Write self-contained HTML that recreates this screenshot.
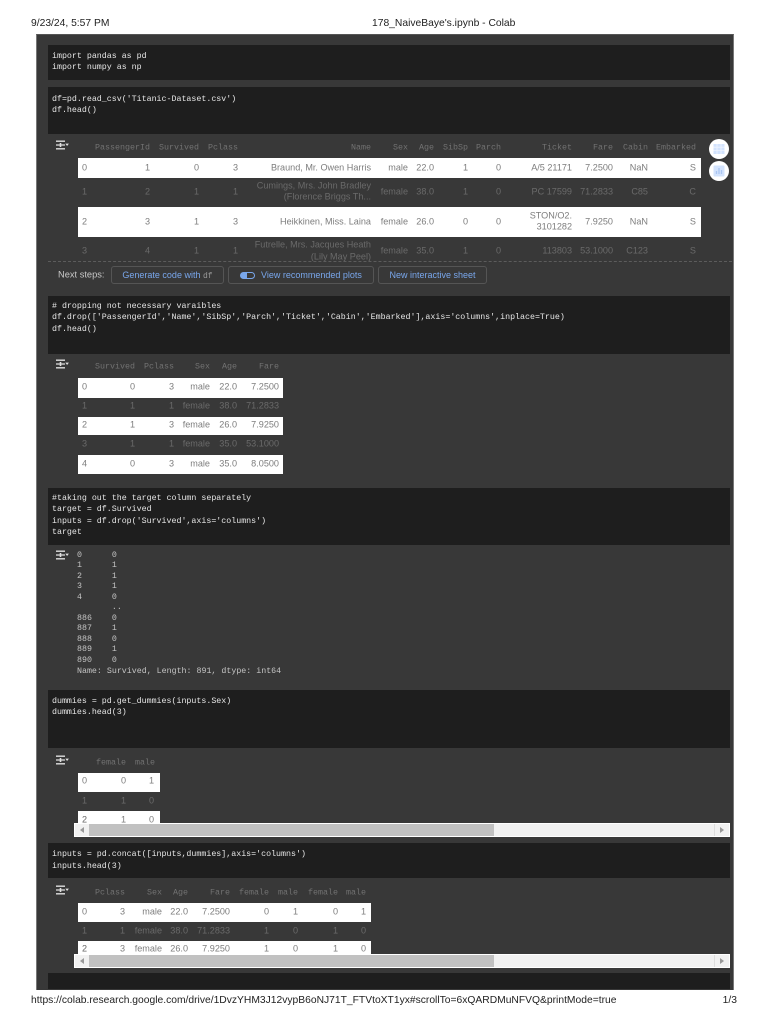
<!DOCTYPE html>
<html><head><meta charset="utf-8"><style>
html,body{margin:0;padding:0;background:#fff}
#p{position:relative;width:768px;height:1024px;overflow:hidden;background:#fff;font-family:"Liberation Sans",sans-serif;filter:blur(.3px)}
#d{position:absolute;left:36px;top:34px;width:696px;height:955px;background:#383838;border-left:1px solid #777;border-right:1px solid #777;border-top:1px solid #555}
.a{position:absolute}
.c{position:absolute;left:48px;width:682px;background:#1e1e1e}
.m{position:absolute;left:52px;margin:0;font:8.3px/11.6px "Liberation Mono",monospace;color:#e6e6e6;white-space:pre}
.o{color:#c4c4c4;left:77px;line-height:10.55px}
.w{position:absolute;background:#fff}
.t,.h,.l{position:absolute;white-space:nowrap;transform:translateY(-50%);line-height:11px}
.t{font-size:9.1px;color:#6a6a6a;text-align:right}
.k{color:#7d7d7d}
.h{font:8.33px/11px "Liberation Mono",monospace;color:#727272}
.l{font-size:9.5px}
.b{position:absolute;top:266px;height:16px;border:1px solid #555;border-radius:3px;color:#79a7ec;font-size:9px;line-height:16px;text-align:center;white-space:nowrap}
.s{position:absolute;left:74px;width:654px;height:12px;background:#f1f1f1;border:1px solid #fff;box-sizing:content-box}
.th{position:absolute;left:14px;width:405px;top:0;height:12px;background:#c1c1c1}
.ar{position:absolute;top:3px;width:0;height:0;border-top:3px solid transparent;border-bottom:3px solid transparent}
.f{position:absolute;font-size:10.3px;line-height:12px;color:#222;white-space:nowrap}
.clip{position:absolute;overflow:hidden}
</style></head><body><div id="p">
<svg width="0" height="0" style="position:absolute"><symbol id="e" viewBox="0 0 14 10"><path d="M1 1.2h9M1 5h9M1 8.8h9" stroke="#e0e0e0" stroke-width="1.3" fill="none"/><path d="M5.5 3v4" stroke="#e0e0e0" stroke-width="1.6"/><path d="M10.3 3.6h3.6L12.1 6z" fill="#e0e0e0"/></symbol></svg>

<div class="f" style="left:31px;top:17.5px">9/23/24, 5:57 PM</div>
<div class="f" style="left:372px;top:17.5px">178_NaiveBaye's.ipynb - Colab</div>

<div id="d"></div>
<div class="c" style="top:45px;height:35px"></div>
<div class="c" style="top:87px;height:47px"></div>
<div class="c" style="top:296px;height:58px"></div>
<div class="c" style="top:488px;height:57px"></div>
<div class="c" style="top:690px;height:58px"></div>
<div class="c" style="top:843px;height:35px"></div>
<div class="c" style="top:973px;height:16px"></div>

<pre class="m" style="top:50.5px">import pandas as pd
import numpy as np</pre>
<pre class="m" style="top:93.5px">df=pd.read_csv('Titanic-Dataset.csv')
df.head()</pre>
<pre class="m" style="top:300.7px"># dropping not necessary varaibles
df.drop(['PassengerId','Name','SibSp','Parch','Ticket','Cabin','Embarked'],axis='columns',inplace=True)
df.head()</pre>
<pre class="m" style="top:492.5px">#taking out the target column separately
target = df.Survived
inputs = df.drop('Survived',axis='columns')
target</pre>
<pre class="m" style="top:695.5px">dummies = pd.get_dummies(inputs.Sex)
dummies.head(3)</pre>
<pre class="m" style="top:849px">inputs = pd.concat([inputs,dummies],axis='columns')
inputs.head(3)</pre>

<svg class="a" style="left:55px;top:140px" width="14" height="10"><use href="#e"/></svg>
<svg class="a" style="left:55px;top:359px" width="14" height="10"><use href="#e"/></svg>
<svg class="a" style="left:55px;top:550px" width="14" height="10"><use href="#e"/></svg>
<svg class="a" style="left:55px;top:755px" width="14" height="10"><use href="#e"/></svg>
<svg class="a" style="left:55px;top:885px" width="14" height="10"><use href="#e"/></svg>

<!-- table 1 -->
<div class="w" style="left:78px;top:158px;width:623px;height:20px"></div>
<div class="w" style="left:78px;top:207px;width:623px;height:30px"></div>
<span class="h" style="right:618px;top:148px">PassengerId</span><span class="h" style="right:569px;top:148px">Survived</span><span class="h" style="right:530px;top:148px">Pclass</span><span class="h" style="right:397px;top:148px">Name</span><span class="h" style="right:360px;top:148px">Sex</span><span class="h" style="right:334px;top:148px">Age</span><span class="h" style="right:300px;top:148px">SibSp</span><span class="h" style="right:267px;top:148px">Parch</span><span class="h" style="right:196px;top:148px">Ticket</span><span class="h" style="right:155px;top:148px">Fare</span><span class="h" style="right:120px;top:148px">Cabin</span><span class="h" style="right:72px;top:148px">Embarked</span>

<span class="t k" style="left:82px;top:168px">0</span><span class="t k" style="right:618px;top:168px">1</span><span class="t k" style="right:569px;top:168px">0</span><span class="t k" style="right:530px;top:168px">3</span><span class="t k" style="right:397px;top:168px">Braund, Mr. Owen Harris</span><span class="t k" style="right:360px;top:168px">male</span><span class="t k" style="right:334px;top:168px">22.0</span><span class="t k" style="right:300px;top:168px">1</span><span class="t k" style="right:267px;top:168px">0</span><span class="t k" style="right:196px;top:168px">A/5 21171</span><span class="t k" style="right:155px;top:168px">7.2500</span><span class="t k" style="right:120px;top:168px">NaN</span><span class="t k" style="right:72px;top:168px">S</span>

<span class="t" style="left:82px;top:192px">1</span><span class="t" style="right:618px;top:192px">2</span><span class="t" style="right:569px;top:192px">1</span><span class="t" style="right:530px;top:192px">1</span><span class="t" style="right:397px;top:186px">Cumings, Mrs. John Bradley</span><span class="t" style="right:397px;top:197px">(Florence Briggs Th...</span><span class="t" style="right:360px;top:192px">female</span><span class="t" style="right:334px;top:192px">38.0</span><span class="t" style="right:300px;top:192px">1</span><span class="t" style="right:267px;top:192px">0</span><span class="t" style="right:196px;top:192px">PC 17599</span><span class="t" style="right:155px;top:192px">71.2833</span><span class="t" style="right:120px;top:192px">C85</span><span class="t" style="right:72px;top:192px">C</span>

<span class="t k" style="left:82px;top:222px">2</span><span class="t k" style="right:618px;top:222px">3</span><span class="t k" style="right:569px;top:222px">1</span><span class="t k" style="right:530px;top:222px">3</span><span class="t k" style="right:397px;top:222px">Heikkinen, Miss. Laina</span><span class="t k" style="right:360px;top:222px">female</span><span class="t k" style="right:334px;top:222px">26.0</span><span class="t k" style="right:300px;top:222px">0</span><span class="t k" style="right:267px;top:222px">0</span><span class="t k" style="right:196px;top:216px">STON/O2.</span><span class="t k" style="right:196px;top:227px">3101282</span><span class="t k" style="right:155px;top:222px">7.9250</span><span class="t k" style="right:120px;top:222px">NaN</span><span class="t k" style="right:72px;top:222px">S</span>

<div class="clip" style="left:0;top:238px;width:768px;height:23px">
<span class="t" style="left:82px;top:13px">3</span><span class="t" style="right:618px;top:13px">4</span><span class="t" style="right:569px;top:13px">1</span><span class="t" style="right:530px;top:13px">1</span><span class="t" style="right:397px;top:7px">Futrelle, Mrs. Jacques Heath</span><span class="t" style="right:397px;top:19px">(Lily May Peel)</span><span class="t" style="right:360px;top:13px">female</span><span class="t" style="right:334px;top:13px">35.0</span><span class="t" style="right:300px;top:13px">1</span><span class="t" style="right:267px;top:13px">0</span><span class="t" style="right:196px;top:13px">113803</span><span class="t" style="right:155px;top:13px">53.1000</span><span class="t" style="right:120px;top:13px">C123</span><span class="t" style="right:72px;top:13px">S</span>
</div>
<div class="a" style="left:48px;top:261px;width:684px;border-top:1px dashed #5c5c5c"></div>

<div class="a" style="left:709px;top:139px;width:20px;height:20px;border-radius:50%;background:#fff"></div>
<div class="a" style="left:709px;top:161px;width:20px;height:20px;border-radius:50%;background:#fff"></div>
<svg class="a" style="left:713px;top:143px" width="12" height="12"><rect x=".5" y="1" width="11" height="10" fill="#d3e3fd"/><path d="M.5 4.2h11M.5 7.5h11M4 1v10M8 1v10" stroke="#eef4fe" stroke-width=".8"/></svg>
<svg class="a" style="left:713px;top:165px" width="12" height="12"><rect x=".5" y=".5" width="11" height="11" rx="1" fill="#d3e3fd"/><path d="M3.5 9V6M6 9V3M8.5 9V5" stroke="#aac6f2" stroke-width="1.3"/></svg>

<span class="l" style="left:58px;top:274.5px;color:#c8c8c8;font-size:9.3px">Next steps:</span>
<div class="b" style="left:111px;width:111px">Generate code with <span style="font:8px 'Liberation Mono',monospace;color:#9a9a9a">df</span></div>
<div class="b" style="left:228px;width:144px"><span style="display:inline-block;width:13px;height:5px;border:1px solid #79a7ec;border-radius:4px;vertical-align:-1px;margin-right:6px;background:linear-gradient(90deg,#79a7ec 45%,transparent 45%)"></span>View recommended plots</div>
<div class="b" style="left:378px;width:107px">New interactive sheet</div>

<!-- table 2 -->
<div class="w" style="left:78px;top:378px;width:205px;height:20px"></div>
<div class="w" style="left:78px;top:417px;width:205px;height:18px"></div>
<div class="w" style="left:78px;top:455px;width:205px;height:19px"></div>
<span class="h" style="right:633px;top:367px">Survived</span><span class="h" style="right:594px;top:367px">Pclass</span><span class="h" style="right:558px;top:367px">Sex</span><span class="h" style="right:531px;top:367px">Age</span><span class="h" style="right:489px;top:367px">Fare</span>

<span class="t k" style="left:82px;top:387px">0</span><span class="t k" style="right:633px;top:387px">0</span><span class="t k" style="right:594px;top:387px">3</span><span class="t k" style="right:558px;top:387px">male</span><span class="t k" style="right:531px;top:387px">22.0</span><span class="t k" style="right:489px;top:387px">7.2500</span>
<span class="t" style="left:82px;top:406px">1</span><span class="t" style="right:633px;top:406px">1</span><span class="t" style="right:594px;top:406px">1</span><span class="t" style="right:558px;top:406px">female</span><span class="t" style="right:531px;top:406px">38.0</span><span class="t" style="right:489px;top:406px">71.2833</span>
<span class="t k" style="left:82px;top:425px">2</span><span class="t k" style="right:633px;top:425px">1</span><span class="t k" style="right:594px;top:425px">3</span><span class="t k" style="right:558px;top:425px">female</span><span class="t k" style="right:531px;top:425px">26.0</span><span class="t k" style="right:489px;top:425px">7.9250</span>
<span class="t" style="left:82px;top:444px">3</span><span class="t" style="right:633px;top:444px">1</span><span class="t" style="right:594px;top:444px">1</span><span class="t" style="right:558px;top:444px">female</span><span class="t" style="right:531px;top:444px">35.0</span><span class="t" style="right:489px;top:444px">53.1000</span>
<span class="t k" style="left:82px;top:464px">4</span><span class="t k" style="right:633px;top:464px">0</span><span class="t k" style="right:594px;top:464px">3</span><span class="t k" style="right:558px;top:464px">male</span><span class="t k" style="right:531px;top:464px">35.0</span><span class="t k" style="right:489px;top:464px">8.0500</span>

<!-- series output -->
<pre class="m o" style="top:550.5px">0      0
1      1
2      1
3      1
4      0
       ..
886    0
887    1
888    0
889    1
890    0
Name: Survived, Length: 891, dtype: int64</pre>

<!-- table 3 -->
<div class="w" style="left:78px;top:773px;width:82px;height:19px"></div>
<div class="w" style="left:78px;top:811px;width:82px;height:13px"></div>
<span class="h" style="right:642px;top:763px">female</span><span class="h" style="right:613px;top:763px">male</span>
<span class="t k" style="left:82px;top:781px">0</span><span class="t k" style="right:642px;top:781px">0</span><span class="t k" style="right:614px;top:781px">1</span>
<span class="t" style="left:82px;top:801px">1</span><span class="t" style="right:642px;top:801px">1</span><span class="t" style="right:614px;top:801px">0</span>
<div class="clip" style="left:0;top:811px;width:768px;height:12px"><span class="t k" style="left:82px;top:9px;color:#666">2</span><span class="t k" style="right:642px;top:9px">1</span><span class="t k" style="right:614px;top:9px">0</span></div>
<div class="s" style="top:823px"><div class="th"></div><div class="ar" style="left:5px;border-right:4px solid #999"></div><div class="ar" style="right:5px;border-left:4px solid #999"></div><div class="a" style="right:14px;top:0;width:1px;height:12px;background:#ddd"></div></div>

<!-- table 4 -->
<div class="w" style="left:78px;top:903px;width:293px;height:19px"></div>
<div class="w" style="left:78px;top:941px;width:293px;height:13px"></div>
<span class="h" style="right:643px;top:893px">Pclass</span><span class="h" style="right:606px;top:893px">Sex</span><span class="h" style="right:580px;top:893px">Age</span><span class="h" style="right:538px;top:893px">Fare</span><span class="h" style="right:499px;top:893px">female</span><span class="h" style="right:470px;top:893px">male</span><span class="h" style="right:430px;top:893px">female</span><span class="h" style="right:402px;top:893px">male</span>

<span class="t k" style="left:82px;top:912px">0</span><span class="t k" style="right:643px;top:912px">3</span><span class="t k" style="right:606px;top:912px">male</span><span class="t k" style="right:580px;top:912px">22.0</span><span class="t k" style="right:538px;top:912px">7.2500</span><span class="t k" style="right:499px;top:912px">0</span><span class="t k" style="right:470px;top:912px">1</span><span class="t k" style="right:430px;top:912px">0</span><span class="t k" style="right:402px;top:912px">1</span>
<span class="t" style="left:82px;top:931px">1</span><span class="t" style="right:643px;top:931px">1</span><span class="t" style="right:606px;top:931px">female</span><span class="t" style="right:580px;top:931px">38.0</span><span class="t" style="right:538px;top:931px">71.2833</span><span class="t" style="right:499px;top:931px">1</span><span class="t" style="right:470px;top:931px">0</span><span class="t" style="right:430px;top:931px">1</span><span class="t" style="right:402px;top:931px">0</span>
<div class="clip" style="left:0;top:941px;width:768px;height:13px"><span class="t k" style="left:82px;top:8px;color:#666">2</span><span class="t k" style="right:643px;top:8px">3</span><span class="t k" style="right:606px;top:8px">female</span><span class="t k" style="right:580px;top:8px">26.0</span><span class="t k" style="right:538px;top:8px">7.9250</span><span class="t k" style="right:499px;top:8px">1</span><span class="t k" style="right:470px;top:8px">0</span><span class="t k" style="right:430px;top:8px">1</span><span class="t k" style="right:402px;top:8px">0</span></div>
<div class="s" style="top:954px"><div class="th"></div><div class="ar" style="left:5px;border-right:4px solid #999"></div><div class="ar" style="right:5px;border-left:4px solid #999"></div><div class="a" style="right:14px;top:0;width:1px;height:12px;background:#ddd"></div></div>

<div class="f" style="left:31px;top:995px">https://colab.research.google.com/drive/1DvzYHM3J12vypB6oNJ71T_FTVtoXT1yx#scrollTo=6xQARDMuNFVQ&amp;printMode=true</div>
<div class="f" style="right:31px;top:995px">1/3</div>
</div></body></html>
